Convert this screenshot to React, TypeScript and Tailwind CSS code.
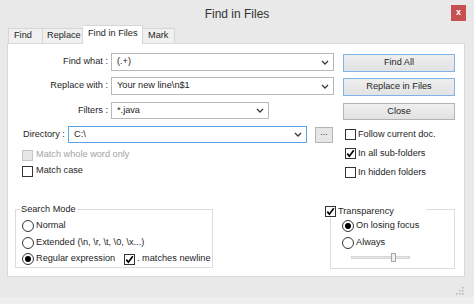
import React from 'react';

// Find in Files dialog (Notepad++ style)

const Chevron = () => (
  <svg width="8" height="5" viewBox="0 0 8 5" className="shrink-0">
    <path d="M1 1 L4 4 L7 1" fill="none" stroke="#3a3a3a" strokeWidth={1.3} />
  </svg>
);

const Combo = ({ value, width, height = 18, focused = false }: { value: string; width: string; height?: number; focused?: boolean }) => (
  <div
    className={`${width} ${height === 18 ? 'h-[18px]' : 'h-[17px]'} flex items-center justify-between bg-white border pl-[5px] pr-[4px] ${
      focused ? 'border-[#5ea1e6]' : 'border-[#b9b9b9]'
    }`}
  >
    <span className="whitespace-pre">{value}</span>
    <Chevron />
  </div>
);

const Check = ({ checked = false, disabled = false }: { checked?: boolean; disabled?: boolean }) => (
  <span
    className={`w-[11px] h-[11px] shrink-0 border flex items-center justify-center ${
      disabled ? 'border-[#c4c4c4] bg-[#e6e6e6]' : 'border-[#333] bg-white'
    }`}
  >
    {checked && (
      <svg width="9" height="9" viewBox="0 0 9 9">
        <path d="M1.3 4.6 L3.4 7.2 L7.8 1.3" fill="none" stroke="#000" strokeWidth={1.7} />
      </svg>
    )}
  </span>
);

const Radio = ({ checked = false }: { checked?: boolean }) => (
  <span className="w-[12px] h-[12px] shrink-0 rounded-full border border-[#333] bg-white flex items-center justify-center">
    {checked && <span className="w-[6px] h-[6px] rounded-full bg-black" />}
  </span>
);

const Button = ({ label, primary = false }: { label: string; primary?: boolean }) => (
  <div
    className={`w-[112px] flex items-center justify-center border bg-gradient-to-b from-[#efefef] to-[#e2e2e2] ${
      primary ? 'h-[18px] border-[#7db3e8]' : 'h-[17px] border-[#b4b4b4]'
    }`}
  >
    {label}
  </div>
);

export default function App() {
  return (
    <div className="w-[474px] h-[304px] bg-[#e9e9e9] flex flex-col text-[9.2px] text-[#1e1e1e] font-['Liberation_Sans',Arial,sans-serif] overflow-hidden whitespace-nowrap">
      {/* title bar */}
      <div className="h-[25px] grid grid-cols-[1fr_auto_1fr] items-start">
        <div />
        <div className="pt-[5px] text-[12px] text-[#333]">Find in Files</div>
        <div className="flex justify-end pt-[5px] pr-[8px]">
          <div className="w-[15px] h-[16px] bg-[#c75050] flex items-center justify-center text-white text-[9px] font-bold leading-none pb-[2px]">
            x
          </div>
        </div>
      </div>

      {/* tabs */}
      <div className="h-[18px] flex items-end pl-[8px]">
        <div className="w-[35px] h-[15px] bg-[#f0f0f0] border border-b-0 border-[#d6d6d6] pl-[5px] flex items-center">Find</div>
        <div className="w-[40px] h-[15px] bg-[#f0f0f0] border border-b-0 border-l-0 border-[#d6d6d6] pl-[4px] flex items-center">Replace</div>
        <div className="w-[60px] h-[19px] -mb-px relative z-10 bg-white border border-b-0 border-l-0 border-[#d6d6d6] pl-[5px] pb-[2px] flex items-center">
          Find in Files
        </div>
        <div className="w-[32px] h-[15px] bg-[#f0f0f0] border border-b-0 border-l-0 border-[#d6d6d6] pl-[5px] flex items-center">Mark</div>
      </div>

      {/* panel */}
      <div className="mx-[7px] w-[458px] h-[234px] bg-white border border-[#d9d9d9] flex flex-col">
        <div className="flex">
          {/* left form */}
          <div className="w-[335px] pt-[9px] flex flex-col">
            <div className="h-[18px] flex items-center">
              <span className="w-[100px] text-right">Find what :</span>
              <div className="ml-[3px]">
                <Combo value="(.+)" width="w-[223px]" />
              </div>
            </div>
            <div className="mt-[6px] h-[18px] flex items-center">
              <span className="w-[100px] text-right">Replace with :</span>
              <div className="ml-[3px]">
                <Combo value="Your new line\n$1" width="w-[223px]" />
              </div>
            </div>
            <div className="mt-[7px] h-[17px] flex items-center">
              <span className="w-[100px] text-right">Filters :</span>
              <div className="ml-[3px]">
                <Combo value="*.java" width="w-[158px]" height={17} />
              </div>
            </div>
            <div className="mt-[7px] h-[17px] flex items-center pl-[15px]">
              <span className="w-[45px]">Directory :</span>
              <Combo value="C:\" width="w-[239px]" height={17} focused />
              <div className="ml-[8px] w-[18px] h-[16px] border border-[#b4b4b4] bg-[#e6e6e6] flex items-center justify-center text-[#444] leading-none pb-[3px]">
                ...
              </div>
            </div>
            <div className="mt-[4px] h-[16px] flex items-center pl-[14px] gap-[3px] text-[#a3a3a3]">
              <Check disabled />
              <span>Match whole word only</span>
            </div>
            <div className="h-[16px] flex items-center pl-[14px] gap-[3px]">
              <Check />
              <span>Match case</span>
            </div>
          </div>

          {/* right column */}
          <div className="w-[112px] pt-[10px] flex flex-col">
            <Button label="Find All" primary />
            <div className="mt-[6px]">
              <Button label="Replace in Files" primary />
            </div>
            <div className="mt-[7px]">
              <Button label="Close" />
            </div>
            <div className="mt-[5px] flex flex-col pl-[2px]">
              <div className="h-[19px] flex items-center gap-[2px]">
                <Check />
                <span>Follow current doc.</span>
              </div>
              <div className="h-[19px] flex items-center gap-[2px]">
                <Check checked />
                <span>In all sub-folders</span>
              </div>
              <div className="h-[19px] flex items-center gap-[2px]">
                <Check />
                <span>In hidden folders</span>
              </div>
            </div>
          </div>
        </div>

        {/* bottom groups */}
        <div className="mt-[27px] flex items-start pl-[7px]">
          <div className="relative w-[198px] h-[59px] border border-[#dcdcdc] pt-[8px] pl-[6px]">
            <span className="absolute -top-[7px] left-[4px] bg-white px-[1px] leading-[12px]">Search Mode</span>
            <div className="h-[16.5px] flex items-center gap-[2px]">
              <Radio />
              <span>Normal</span>
            </div>
            <div className="h-[16.5px] flex items-center gap-[2px]">
              <Radio />
              <span>Extended (\n, \r, \t, \0, \x...)</span>
            </div>
            <div className="h-[16.5px] flex items-center">
              <div className="w-[102px] flex items-center gap-[2px]">
                <Radio checked />
                <span>Regular expression</span>
              </div>
              <Check checked />
              <span className="ml-[2px]">. matches newline</span>
            </div>
          </div>

          <div className="relative ml-[117px] w-[125px] h-[60px] border border-[#dcdcdc] pt-[8px] pl-[11px]">
            <div className="absolute -top-[4px] -left-[6px] w-[101px] h-[12px] bg-white flex items-start gap-[2px]">
              <Check checked />
              <span className="leading-[11px]">Transparency</span>
            </div>
            <div className="h-[16.5px] flex items-center gap-[2px]">
              <Radio checked />
              <span>On losing focus</span>
            </div>
            <div className="h-[16.5px] flex items-center gap-[2px]">
              <Radio />
              <span>Always</span>
            </div>
            <div className="h-[12px] flex items-center pl-[9px]">
              <div className="relative w-[59px] h-[3px] bg-[#e7e7e7] border border-[#d6d6d6]">
                <div className="absolute left-[39px] -top-[4px] w-[5px] h-[9px] bg-[#efefef] border border-[#a8a8a8]" />
              </div>
            </div>
          </div>
        </div>
      </div>

      {/* status strip with grip */}
      <div className="h-[20px] flex items-end justify-end pr-[10px] pb-[2px]">
        <svg width="9" height="9" viewBox="0 0 9 9">
          <rect x="7" y="1" width="1.5" height="1.5" fill="#b5b5b5" />
          <rect x="4" y="4" width="1.5" height="1.5" fill="#b5b5b5" />
          <rect x="7" y="4" width="1.5" height="1.5" fill="#b5b5b5" />
          <rect x="1" y="7" width="1.5" height="1.5" fill="#b5b5b5" />
          <rect x="4" y="7" width="1.5" height="1.5" fill="#b5b5b5" />
          <rect x="7" y="7" width="1.5" height="1.5" fill="#b5b5b5" />
        </svg>
      </div>
      <div className="flex-1 bg-[#efefef]" />
    </div>
  );
}
